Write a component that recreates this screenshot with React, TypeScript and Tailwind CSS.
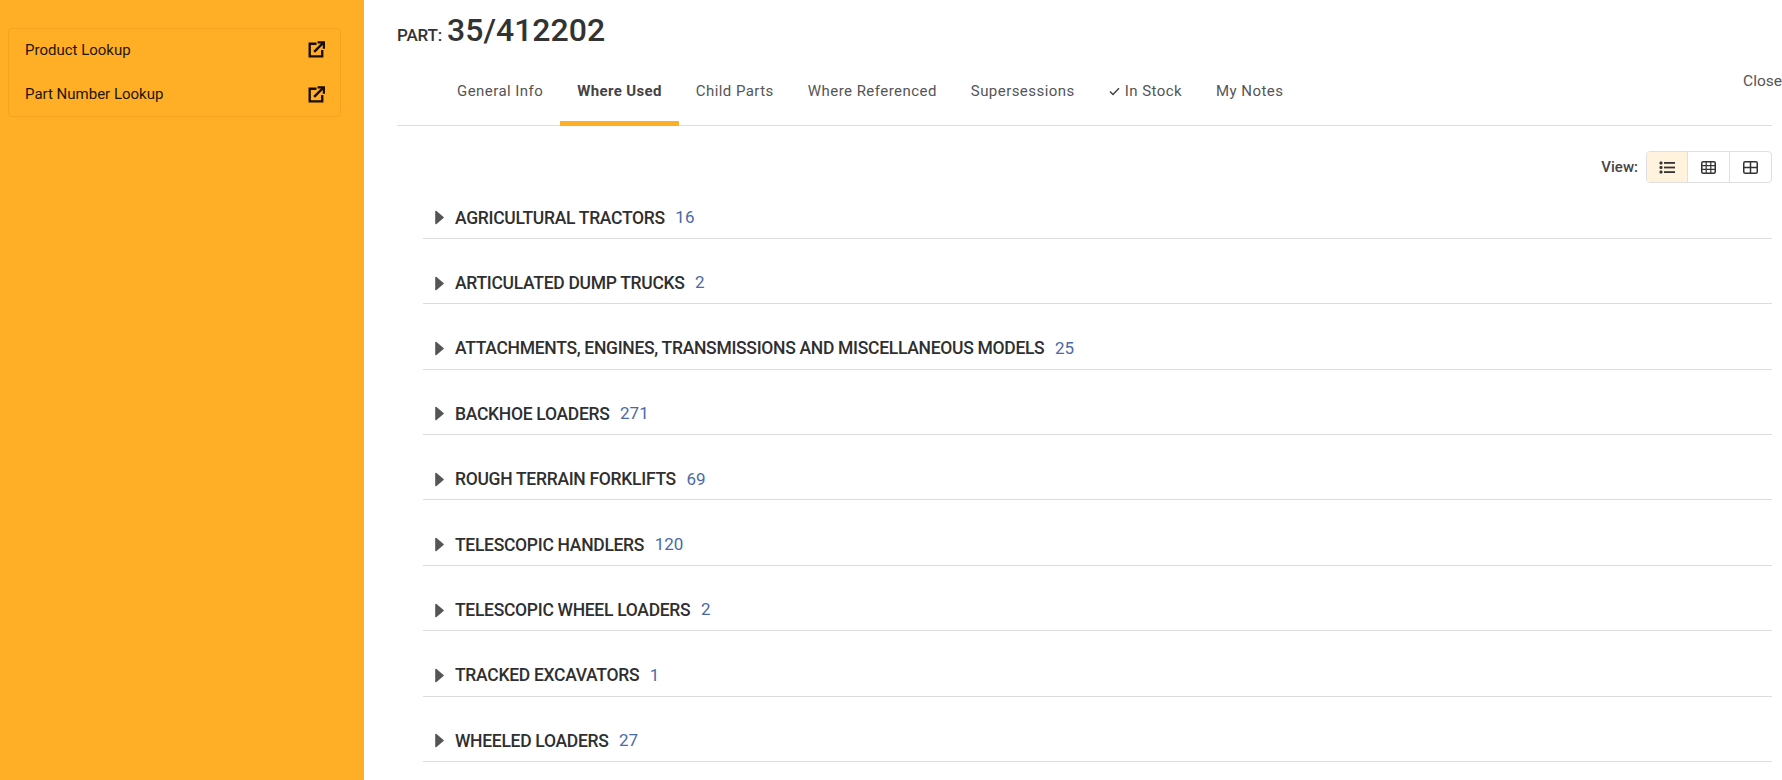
import React from "react";

const tabs = ["General Info", "Where Used", "Child Parts", "Where Referenced", "Supersessions", "In Stock", "My Notes"];
const rows: [string, number][] = [
  ["AGRICULTURAL TRACTORS", 16],
  ["ARTICULATED DUMP TRUCKS", 2],
  ["ATTACHMENTS, ENGINES, TRANSMISSIONS AND MISCELLANEOUS MODELS", 25],
  ["BACKHOE LOADERS", 271],
  ["ROUGH TERRAIN FORKLIFTS", 69],
  ["TELESCOPIC HANDLERS", 120],
  ["TELESCOPIC WHEEL LOADERS", 2],
  ["TRACKED EXCAVATORS", 1],
  ["WHEELED LOADERS", 27],
];

function ExtIcon() {
  return (
    <svg width="17" height="17" viewBox="0 0 16 16" fill="none" stroke="#1a0d00" strokeWidth="2.2">
      <path d="M8 2.6H1.6v11.8h11.8V8.4" />
      <path d="M5.8 10.2 14 2" />
      <path d="M9 1.3h6v6" fill="none" />
    </svg>
  );
}

function Lookup({ label }: { label: string }) {
  return (
    <div className="flex h-[43.5px] items-center justify-between pl-4 pr-[15px] text-[15px] text-[#1f1408] first:pb-[2px]">
      <span>{label}</span>
      <ExtIcon />
    </div>
  );
}

export default function App() {
  return (
    <div className="flex h-[780px] w-[1782px] overflow-hidden bg-white font-['Roboto',sans-serif]">
      <aside className="h-full w-[364px] shrink-0 bg-[#ffaf26] pl-2 pr-[23px] pt-[28px]">
        <div className="rounded border border-[#f0a41f]">
          <Lookup label="Product Lookup" />
          <Lookup label="Part Number Lookup" />
        </div>
      </aside>
      <main className="min-w-0 flex-1 pl-[33px] pr-[10px]">
        <div className="flex h-[62px] items-baseline gap-[5px] pt-[9px] text-[#333]">
          <span className="text-[17px] font-medium tracking-[-0.15px]">PART:</span>
          <span className="text-[32px] font-medium leading-[42px]">35/412202</span>
        </div>
        <div className="flex h-[64px] items-stretch justify-between border-b border-[#dedede] pl-[43px]">
          <div className="flex">
            {tabs.map((t) => (
              <div
                key={t}
                className={
                  t === "Where Used"
                    ? "-mb-px flex items-center gap-1 border-b-[5px] border-[#ffaf26] px-[17px] text-[15px] font-bold text-[#444] tracking-[0.35px]"
                    : "flex items-center gap-[5px] px-[17px] pb-[4px] text-[15px] tracking-[0.45px] text-[#555]"
                }
              >
                {t === "In Stock" && (
                  <svg width="11" height="9" viewBox="0 0 11 9" fill="none" stroke="#444" strokeWidth="1.5">
                    <path d="M1 4.5 4 7.5 10 1.2" />
                  </svg>
                )}
                {t}
              </div>
            ))}
          </div>
          <div className="-mr-[10px] pb-[16px] pt-[8px] text-[15.5px] text-[#555]">Close</div>
        </div>
        <div className="mt-[28px] flex h-[26px] items-center justify-end">
          <span className="mr-2 text-[15px] font-medium text-[#444]">View:</span>
          <div className="flex h-8 items-stretch overflow-hidden rounded border border-[#dfdfdf]">
            <div className="flex w-[41px] items-center justify-center border-r border-[#dfdfdf] bg-[#fff3de]">
              <svg width="16" height="13" viewBox="0 0 16 13" fill="#333">
                <rect x="0.5" y="0.5" width="3" height="3" rx="1.2" />
                <rect x="0.5" y="5" width="3" height="3" rx="1.2" />
                <rect x="0.5" y="9.5" width="3" height="3" rx="1.2" />
                <rect x="5" y="1" width="11" height="1.8" />
                <rect x="5" y="5.6" width="11" height="1.8" />
                <rect x="5" y="10.2" width="11" height="1.8" />
              </svg>
            </div>
            <div className="flex w-[42px] items-center justify-center border-r border-[#dfdfdf]">
              <svg width="15" height="13" viewBox="0 0 15 13" fill="none" stroke="#333" strokeWidth="1.5">
                <rect x="0.75" y="0.75" width="13.5" height="11.5" rx="1.5" />
                <path d="M0.75 4.6h13.5M0.75 8.4h13.5M5.2 0.75v11.5M9.8 0.75v11.5" strokeWidth="1.2" />
              </svg>
            </div>
            <div className="flex w-[41px] items-center justify-center">
              <svg width="15" height="13" viewBox="0 0 15 13" fill="none" stroke="#333" strokeWidth="1.5">
                <rect x="0.75" y="0.75" width="13.5" height="11.5" rx="1.5" />
                <path d="M0.75 6.5h13.5M7.5 0.75v11.5" />
              </svg>
            </div>
          </div>
        </div>
        <div className="-mt-[6.5px] ml-[26px]">
          {rows.map(([name, n]) => (
            <div key={name} className="flex h-[65.4px] items-center border-b border-[#dcdcdc] pb-[6px] pt-[30px]">
              <svg className="ml-[12px] mr-[11px] shrink-0" width="9" height="15" viewBox="0 0 9 15" fill="#555">
                <path d="M1 1.5 8 7.5 1 13.5Z" stroke="#555" strokeWidth="1.6" strokeLinejoin="round" />
              </svg>
              <span className="text-[17.5px] font-medium tracking-[-0.3px] text-[#2f2f2f]">{name}</span>
              <span className="ml-[10.5px] text-[17px] text-[#4a6aa5]">{n}</span>
            </div>
          ))}
        </div>
      </main>
    </div>
  );
}
